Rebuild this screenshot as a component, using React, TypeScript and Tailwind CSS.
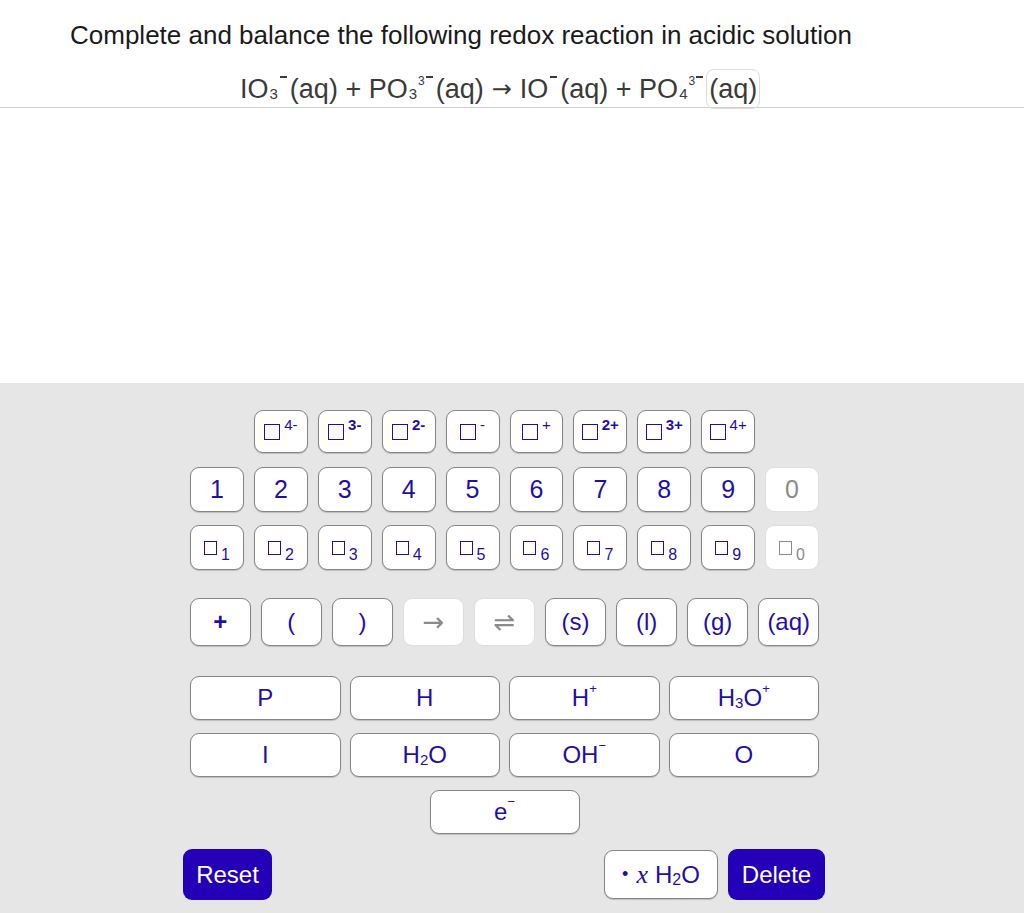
import React from 'react';
import clsx from 'clsx';

// one key of the keypad
const Key = ({
  children,
  disabled,
  className,
}: {
  children: React.ReactNode;
  disabled?: boolean;
  className?: string;
}) => (
  <div
    className={clsx(
      'flex items-center justify-center rounded-[9px] bg-white border',
      disabled
        ? 'border-[#dedede] text-[#8a8a8a]'
        : 'border-[#858585] text-[#1f0fa6] shadow-[0_1px_1px_rgba(0,0,0,0.18)]',
      className
    )}
  >
    {children}
  </div>
);

const Box = ({ small, disabled }: { small?: boolean; disabled?: boolean }) => (
  <span
    className={clsx(
      'inline-block border-[1.5px]',
      disabled ? 'border-[#8a8a8a]' : 'border-[#1f0fa6]',
      small ? 'w-[13px] h-[14px]' : 'w-[16px] h-[16px]'
    )}
  />
);

const charges = [
  { t: '4-', b: false },
  { t: '3-', b: true },
  { t: '2-', b: true },
  { t: '-', b: false },
  { t: '+', b: false },
  { t: '2+', b: true },
  { t: '3+', b: true },
  { t: '4+', b: false },
];

const digits = ['1', '2', '3', '4', '5', '6', '7', '8', '9', '0'];

const Sup = ({ children, className }: { children: React.ReactNode; className?: string }) => (
  <span className={clsx('text-[13px] relative -top-[8px]', className)}>{children}</span>
);
const Sub = ({ children, className }: { children: React.ReactNode; className?: string }) => (
  <span className={clsx('text-[15px] relative top-[5px]', className)}>{children}</span>
);

// charge mark in the equation: small digit then a raised bar
const EqCharge = ({ n }: { n?: string }) => (
  <span className="self-start mt-[6px] inline-flex items-start leading-none text-[12px] ml-[1px]">
    {n}
    <span className="block w-[7px] h-[2px] bg-[#3a3a3a] mt-[1px] ml-[1px]" />
  </span>
);

export default function App() {
  return (
    <div className="w-[1024px] h-[913px] flex flex-col bg-white font-['Liberation_Sans',Arial,sans-serif]">
      {/* question header */}
      <div className="h-[108px] border-b border-[#d0d0d0] flex flex-col">
        <div className="pt-[19px] pl-[70px] text-[26px] leading-[32px] text-[#1a1a1a]">
          Complete and balance the following redox reaction in acidic solution
        </div>
        <div className="mt-[18px] flex items-center pl-[240px] text-[27px] leading-[34px] text-[#3a3a3a]">
          <span>IO</span>
          <Sub className="ml-[1px]">3</Sub>
          <EqCharge />
          <span className="ml-[3px]">(aq) + PO</span>
          <Sub className="ml-[1px]">3</Sub>
          <EqCharge n="3" />
          <span className="ml-[3px]">(aq)</span>
          <span className="mx-[8px] font-['DejaVu_Sans',sans-serif] text-[24px]">→</span>
          <span>IO</span>
          <EqCharge />
          <span className="ml-[3px]">(aq) + PO</span>
          <Sub className="ml-[1px]">4</Sub>
          <EqCharge n="3" />
          <span className="ml-[3px] px-[2px] rounded-[8px] border border-[#dcdcdc] leading-[38px]">(aq)</span>
        </div>
      </div>

      <div className="h-[275px]" />

      {/* keypad */}
      <div className="flex-1 bg-[#e6e6e6] pt-[27px]">
        <div className="ml-[190px] w-[629px] flex flex-col">
          <div className="grid grid-cols-10 gap-x-[10px]">
            <div />
            {charges.map((c) => (
              <Key key={c.t} className="h-[43px]">
                <Box />
                <span
                  className={clsx(
                    'ml-[4px] text-[15px] relative -top-[6px]',
                    c.b && 'font-bold'
                  )}
                >
                  {c.t}
                </span>
              </Key>
            ))}
          </div>

          <div className="mt-[14px] grid grid-cols-10 gap-x-[10px]">
            {digits.map((d) => (
              <Key key={d} disabled={d === '0'} className="h-[45px] text-[25px]">
                {d}
              </Key>
            ))}
          </div>

          <div className="mt-[13px] grid grid-cols-10 gap-x-[10px]">
            {digits.map((d) => (
              <Key key={d} disabled={d === '0'} className="h-[45px]">
                <Box small disabled={d === '0'} />
                <span className="ml-[4px] text-[16px] relative top-[7px]">{d}</span>
              </Key>
            ))}
          </div>

          <div className="mt-[28px] grid grid-cols-9 gap-x-[10.5px] text-[24px]">
            <Key className="h-[48px] font-bold">+</Key>
            <Key className="h-[48px]">(</Key>
            <Key className="h-[48px]">)</Key>
            <Key disabled className="h-[48px] font-['DejaVu_Sans',sans-serif] text-[26px]">→</Key>
            <Key disabled className="h-[48px] font-['DejaVu_Sans',sans-serif] text-[26px]">⇌</Key>
            <Key className="h-[48px]">(s)</Key>
            <Key className="h-[48px]">(l)</Key>
            <Key className="h-[48px]">(g)</Key>
            <Key className="h-[48px]">(aq)</Key>
          </div>

          <div className="mt-[30px] grid grid-cols-4 gap-x-[9px] gap-y-[13px] text-[24px]">
            <Key className="h-[44px]">P</Key>
            <Key className="h-[44px]">H</Key>
            <Key className="h-[44px]">
              H<Sup className="-top-[9px]">+</Sup>
            </Key>
            <Key className="h-[44px]">
              H<Sub>3</Sub>O<Sup className="-top-[9px]">+</Sup>
            </Key>
            <Key className="h-[44px]">I</Key>
            <Key className="h-[44px]">
              H<Sub>2</Sub>O
            </Key>
            <Key className="h-[44px]">
              OH<Sup className="-top-[9px]">−</Sup>
            </Key>
            <Key className="h-[44px]">O</Key>
          </div>

          <div className="mt-[13px] flex justify-center">
            <Key className="h-[44px] w-[150px] text-[24px]">
              e<Sup className="-top-[10px]">−</Sup>
            </Key>
          </div>
        </div>

        <div className="mt-[15px] ml-[183px] w-[642px] flex items-center">
          <div className="h-[51px] w-[89px] rounded-[9px] bg-[#2300b8] text-white text-[24px] flex items-center justify-center">
            Reset
          </div>
          <div className="flex-1" />
          <Key className="h-[49px] w-[114px] text-[24px]">
            <span className="text-[18px] mr-[8px]">•</span>
            <span className="font-['Liberation_Serif',serif] italic text-[26px] mr-[7px]">x</span>
            H<Sub className="text-[16px]">2</Sub>O
          </Key>
          <div className="ml-[10px] h-[51px] w-[97px] rounded-[9px] bg-[#2300b8] text-white text-[24px] flex items-center justify-center">
            Delete
          </div>
        </div>
      </div>
    </div>
  );
}
